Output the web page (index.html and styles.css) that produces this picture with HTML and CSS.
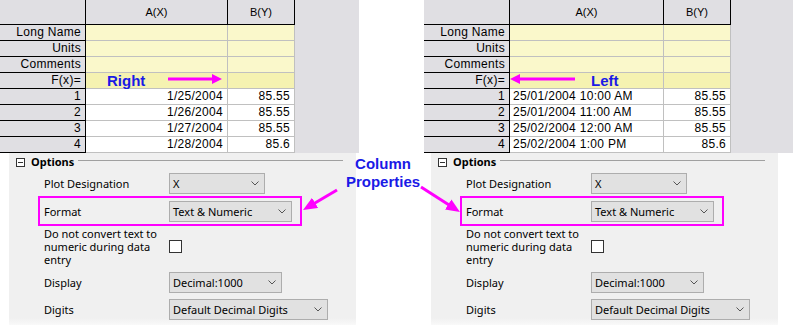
FILE: index.html
```html
<!DOCTYPE html>
<html>
<head>
<meta charset="utf-8">
<link rel="stylesheet" href="styles.css">
</head>
<body>
<div class="page">
  <div class="top">
    <div class="sheetwrap sw-left">
      <div class="sheet sheet-left">
        <div class="c hd"></div><div class="c hd">A(X)</div><div class="c hd">B(Y)</div>
        <div class="c rh">Long Name</div><div class="c lab"></div><div class="c lab"></div>
        <div class="c rh">Units</div><div class="c lab"></div><div class="c lab"></div>
        <div class="c rh">Comments</div><div class="c lab"></div><div class="c lab"></div>
        <div class="c rh">F(x)=</div><div class="c fx fx-right"><span class="note">Right</span></div><div class="c fx"></div>
        <div class="c rh">1</div><div class="c dat">1/25/2004</div><div class="c dat">85.55</div>
        <div class="c rh">2</div><div class="c dat">1/26/2004</div><div class="c dat">85.55</div>
        <div class="c rh">3</div><div class="c dat">1/27/2004</div><div class="c dat">85.55</div>
        <div class="c rh">4</div><div class="c dat">1/28/2004</div><div class="c dat">85.6</div>
      </div>
    </div>
    <div class="gap"></div>
    <div class="sheetwrap sw-right">
      <div class="sheet sheet-right">
        <div class="c hd"></div><div class="c hd">A(X)</div><div class="c hd">B(Y)</div>
        <div class="c rh">Long Name</div><div class="c lab"></div><div class="c lab"></div>
        <div class="c rh">Units</div><div class="c lab"></div><div class="c lab"></div>
        <div class="c rh">Comments</div><div class="c lab"></div><div class="c lab"></div>
        <div class="c rh">F(x)=</div><div class="c fx fx-left"><span class="note">Left</span></div><div class="c fx"></div>
        <div class="c rh">1</div><div class="c dat txt">25/01/2004 10:00 AM</div><div class="c dat">85.55</div>
        <div class="c rh">2</div><div class="c dat txt">25/01/2004 11:00 AM</div><div class="c dat">85.55</div>
        <div class="c rh">3</div><div class="c dat txt">25/02/2004 12:00 AM</div><div class="c dat">85.55</div>
        <div class="c rh">4</div><div class="c dat txt">25/02/2004 1:00 PM</div><div class="c dat">85.6</div>
      </div>
    </div>
  </div>

  <div class="bottom">
    <div class="panel p1">
      <div class="opthead">
        <svg class="collapse" width="9" height="9" viewBox="0 0 9 9"><rect x="0.5" y="0.5" width="8" height="8" fill="#fff" stroke="#333"/><line x1="2" y1="4.5" x2="7" y2="4.5" stroke="#333"/></svg>
        <span class="opttitle">Options</span>
        <span class="optline"></span>
      </div>
      <div class="row"><span class="lbl">Plot Designation</span><div class="dd w-plot"><span>X</span><svg class="chev" width="8" height="5" viewBox="0 0 8 5"><polyline points="0.5,0.5 4,4 7.5,0.5" fill="none" stroke="#555"/></svg></div></div>
      <div class="fbox"><span class="lbl">Format</span><div class="dd w-fmt"><span>Text &amp; Numeric</span><svg class="chev" width="8" height="5" viewBox="0 0 8 5"><polyline points="0.5,0.5 4,4 7.5,0.5" fill="none" stroke="#555"/></svg></div></div>
      <div class="row cbrow"><span class="lbl ml">Do not convert text to<br>numeric during data<br>entry</span><span class="cb"></span></div>
      <div class="row gap6"><span class="lbl">Display</span><div class="dd w-disp"><span>Decimal:1000</span><svg class="chev" width="8" height="5" viewBox="0 0 8 5"><polyline points="0.5,0.5 4,4 7.5,0.5" fill="none" stroke="#555"/></svg></div></div>
      <div class="row gap6"><span class="lbl">Digits</span><div class="dd w-dig"><span>Default Decimal Digits</span><svg class="chev" width="8" height="5" viewBox="0 0 8 5"><polyline points="0.5,0.5 4,4 7.5,0.5" fill="none" stroke="#555"/></svg></div></div>
    </div>
    <div class="panel p2">
      <div class="opthead">
        <svg class="collapse" width="9" height="9" viewBox="0 0 9 9"><rect x="0.5" y="0.5" width="8" height="8" fill="#fff" stroke="#333"/><line x1="2" y1="4.5" x2="7" y2="4.5" stroke="#333"/></svg>
        <span class="opttitle">Options</span>
        <span class="optline"></span>
      </div>
      <div class="row"><span class="lbl">Plot Designation</span><div class="dd w-plot"><span>X</span><svg class="chev" width="8" height="5" viewBox="0 0 8 5"><polyline points="0.5,0.5 4,4 7.5,0.5" fill="none" stroke="#555"/></svg></div></div>
      <div class="fbox"><span class="lbl">Format</span><div class="dd w-fmt"><span>Text &amp; Numeric</span><svg class="chev" width="8" height="5" viewBox="0 0 8 5"><polyline points="0.5,0.5 4,4 7.5,0.5" fill="none" stroke="#555"/></svg></div></div>
      <div class="row cbrow"><span class="lbl ml">Do not convert text to<br>numeric during data<br>entry</span><span class="cb"></span></div>
      <div class="row gap6"><span class="lbl">Display</span><div class="dd w-disp"><span>Decimal:1000</span><svg class="chev" width="8" height="5" viewBox="0 0 8 5"><polyline points="0.5,0.5 4,4 7.5,0.5" fill="none" stroke="#555"/></svg></div></div>
      <div class="row gap6"><span class="lbl">Digits</span><div class="dd w-dig"><span>Default Decimal Digits</span><svg class="chev" width="8" height="5" viewBox="0 0 8 5"><polyline points="0.5,0.5 4,4 7.5,0.5" fill="none" stroke="#555"/></svg></div></div>
    </div>
  </div>

  <div class="callout">Column<br>Properties</div>

  <svg class="arrows" width="793" height="325" viewBox="0 0 793 325">
    <defs>
      <marker id="hs" markerUnits="userSpaceOnUse" markerWidth="10" markerHeight="10" refX="4" refY="5" orient="auto">
        <path d="M0,0 L10,5 L0,10 z" fill="#ff00ff"/>
      </marker>
      <marker id="hl" markerUnits="userSpaceOnUse" markerWidth="14" markerHeight="12" refX="8" refY="6" orient="auto">
        <path d="M0,0 L14,6 L0,12 z" fill="#ff00ff"/>
      </marker>
    </defs>
    <line x1="168" y1="79" x2="216" y2="79" stroke="#ff00ff" stroke-width="3" marker-end="url(#hs)"/>
    <line x1="575" y1="79" x2="516" y2="79" stroke="#ff00ff" stroke-width="3" marker-end="url(#hs)"/>
    <line x1="337" y1="190" x2="308.2" y2="207" stroke="#ff00ff" stroke-width="3" marker-end="url(#hl)"/>
    <line x1="421" y1="187" x2="454.9" y2="208.8" stroke="#ff00ff" stroke-width="3" marker-end="url(#hl)"/>
  </svg>
</div>
</body>
</html>
```

FILE: styles.css
```css
body {
  margin: 0;
  background: #fff;
}

.page {
  position: relative;
  width: 793px;
  height: 325px;
  overflow: hidden;
  font-family: "Liberation Sans", Arial, sans-serif;
}

.top {
  display: flex;
  height: 153px;
}

.sheetwrap {
  background: #e0dfe3;
  height: 153px;
}

.sw-left { width: 359px; }
.gap { width: 65px; background: #fff; }
.sw-right { flex: 1; }

.sheet {
  display: grid;
  grid-template-rows: 25px repeat(8, 16px);
  font-size: 12px;
  letter-spacing: 0.3px;
  color: #000;
}

.sheet-left { grid-template-columns: 86px 142px 67px; }
.sheet-right { grid-template-columns: 86px 154px 67px; }

.c {
  box-sizing: border-box;
  border-right: 1px solid #c0c0c0;
  border-bottom: 1px solid #c0c0c0;
  display: flex;
  align-items: center;
  padding: 0 4px;
  white-space: nowrap;
  line-height: 15px;
  overflow: visible;
}

.c.hd {
  background: #e0dfe3;
  border-color: #000;
  justify-content: center;
  font-size: 11px;
  letter-spacing: 0;
}

.c.rh {
  background: #e0dfe3;
  border-color: #000;
  justify-content: flex-end;
}

.c.lab { background: #faf8cb; }
.c.fx { background: #f5f2b1; }

.c.dat {
  background: #fff;
  justify-content: flex-end;
}

.c.dat.txt {
  justify-content: flex-start;
  padding-left: 3px;
}

.fx-right { padding-left: 21px; }
.fx-left { padding-left: 81px; }

.note {
  font-weight: bold;
  font-size: 15px;
  letter-spacing: 0;
  color: #1a1ae6;
}

.bottom {
  display: flex;
  height: 172px;
}

.panel {
  width: 347px;
  box-sizing: border-box;
  padding-left: 7px;
  background: linear-gradient(to bottom, #f0f0f0 0, #f0f0f0 calc(100% - 7px), #f9f9f9 100%);
  font-family: "Noto Sans", "Open Sans", sans-serif;
  font-size: 11px;
  color: #000;
  display: flex;
  flex-direction: column;
}

.p1 { margin-left: 9px; }
.p2 { margin-left: 75px; }

.opthead {
  display: flex;
  align-items: center;
  height: 18px;
}

.collapse { flex: none; display: block; }

.opttitle {
  font-weight: bold;
  margin-left: 6px;
  line-height: 14px;
}

.optline {
  flex: 1;
  height: 1px;
  background: #a0a0a0;
  margin-left: 4px;
  margin-right: 13px;
  margin-bottom: 4px;
}

.row {
  display: flex;
  align-items: center;
  height: 21px;
  margin-top: 2px;
  padding-left: 28px;
}

.lbl {
  width: 125px;
  flex: none;
  line-height: 14px;
}

.lbl.ml { line-height: 13px; }

.cbrow {
  height: 39px;
  margin-top: 1px;
}

.gap6 { margin-top: 6px; }

.fbox {
  display: flex;
  align-items: center;
  box-sizing: border-box;
  margin-top: 2px;
  margin-left: 22px;
  width: 264px;
  height: 30px;
  border: 2px solid #ff00ff;
  padding: 3px 0 2px 4px;
}

.dd {
  box-sizing: border-box;
  height: 21px;
  border: 1px solid #adadad;
  background: #e1e1e1;
  display: flex;
  align-items: center;
  justify-content: space-between;
  padding: 0 5px 0 3px;
  white-space: nowrap;
}

.chev { display: block; flex: none; }

.w-plot { width: 96px; }
.w-fmt { width: 123px; }
.w-disp { width: 113px; }
.w-dig { width: 159px; }

.cb {
  width: 13px;
  height: 13px;
  box-sizing: border-box;
  border: 1px solid #333;
  background: #fff;
}

.callout {
  position: absolute;
  left: 333px;
  top: 155px;
  width: 100px;
  text-align: center;
  font-family: "Liberation Sans", Arial, sans-serif;
  font-weight: bold;
  font-size: 15px;
  line-height: 18px;
  color: #1a1ae6;
}

.arrows {
  position: absolute;
  left: 0;
  top: 0;
  pointer-events: none;
}
```
